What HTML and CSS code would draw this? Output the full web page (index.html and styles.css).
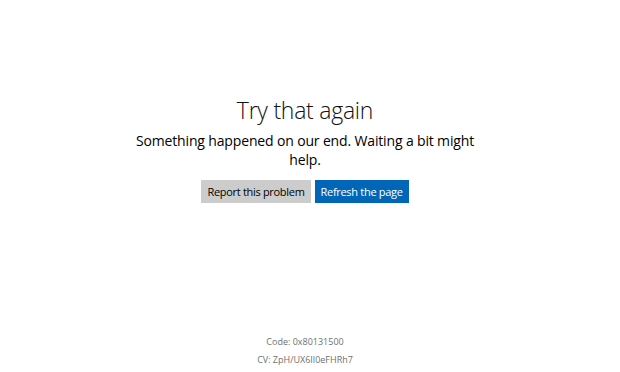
FILE: index.html
```html
<!DOCTYPE html>
<html lang="en">
<head>
<meta charset="utf-8">
<title>Try that again</title>
<link rel="stylesheet" href="styles.css">
</head>
<body>
<div class="page">
  <main class="content">
    <h1 class="title">Try that again</h1>
    <p class="message">Something happened on our end. Waiting a bit might help.</p>
    <div class="actions">
      <button class="btn btn-secondary" type="button">Report this problem</button>
      <button class="btn btn-primary" type="button">Refresh the page</button>
    </div>
  </main>
  <footer class="footer">
    <div class="code">Code: 0x80131500</div>
    <div class="code">CV: ZpH/UX6Il0eFHRh7</div>
  </footer>
</div>
</body>
</html>
```

FILE: styles.css
```css
html, body {
  margin: 0;
  padding: 0;
  background: #ffffff;
}
body {
  font-family: "Open Sans", "Noto Sans", sans-serif;
  color: #000000;
}
.page {
  width: 610px;
  height: 372px;
  display: flex;
  flex-direction: column;
  align-items: center;
}
.content {
  margin-top: 95px;
  width: 350px;
  display: flex;
  flex-direction: column;
  align-items: center;
  text-align: center;
}
.title {
  margin: 0;
  font-size: 23px;
  font-weight: 300;
  letter-spacing: -0.25px;
  line-height: 30px;
  color: #111111;
}
.message {
  margin: 6px 0 0;
  font-size: 14px;
  letter-spacing: -0.15px;
  line-height: 19px;
  color: #000;
}
.actions {
  margin-top: 11px;
  display: flex;
  gap: 4px;
}
.btn {
  border: none;
  font-family: inherit;
  font-size: 11px;
  letter-spacing: -0.3px;
  height: 23px;
  padding: 0 6px;
  line-height: 23px;
}
.btn-secondary {
  background: #cccccc;
  color: #000;
}
.btn-primary {
  background: #0067b8;
  color: #fff;
}
.footer {
  margin-top: auto;
  margin-bottom: 5px;
  display: flex;
  flex-direction: column;
  align-items: center;
  gap: 3px;
}
.code {
  font-size: 9px;
  line-height: 15px;
  color: #707070;
}
```
